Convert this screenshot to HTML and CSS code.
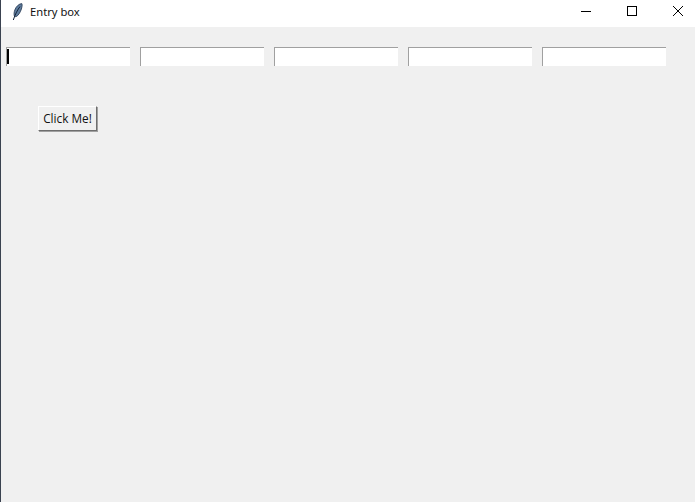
FILE: index.html
```html
<!DOCTYPE html>
<html lang="en">
<head>
    <meta charset="UTF-8">
    <meta name="viewport" content="width=device-width, initial-scale=1.0">
    <title>Entry box</title>
    <link rel="stylesheet" href="styles.css">
</head>
<body>
    <div class="window">
        <header class="titlebar">
            <svg class="app-icon" width="12" height="18" viewBox="0 0 12 18">
                <path d="M9.8 0.6C7 0.8 4 3.5 2.8 7C2 9.3 1.8 11.5 2.4 13.2C3.2 14 4.6 13.6 5.8 12.4C7.8 10.4 9.5 6.8 10 3.5C10.2 2.2 10.2 1.2 9.8 0.6Z" fill="#5f7d9e" stroke="#22344c" stroke-width="0.8"/>
                <path d="M8 3.5C5.8 6.5 3.2 11 1.3 17" fill="none" stroke="#14233a" stroke-width="1"/>
            </svg>
            <span class="title">Entry box</span>
            <div class="controls">
                <svg class="control" width="46" height="27" viewBox="0 0 46 27">
                    <path d="M24 11.5H34" stroke="#000" stroke-width="1"/>
                </svg>
                <svg class="control" width="46" height="27" viewBox="0 0 46 27">
                    <rect x="24.5" y="6.5" width="9" height="9" fill="none" stroke="#000" stroke-width="1"/>
                </svg>
                <svg class="control" width="46" height="27" viewBox="0 0 46 27">
                    <path d="M24 6L34 16M34 6L24 16" stroke="#000" stroke-width="1"/>
                </svg>
            </div>
        </header>
        <main class="content">
            <div class="entries">
                <div class="entry"><span class="caret"></span></div>
                <div class="entry"></div>
                <div class="entry"></div>
                <div class="entry"></div>
                <div class="entry"></div>
            </div>
            <button class="click-btn">Click Me!</button>
        </main>
    </div>
</body>
</html>
```

FILE: styles.css
```css
html, body {
    margin: 0;
    padding: 0;
    height: 100%;
    overflow: hidden;
}

body {
    font-family: "Open Sans", "Liberation Sans", sans-serif;
    background-color: #f0f0f0;
}

.window {
    height: 100%;
    display: flex;
    flex-direction: column;
    border-left: 1px solid #3a4250;
    box-sizing: border-box;
}

.titlebar {
    height: 27px;
    flex-shrink: 0;
    display: flex;
    align-items: center;
    background-color: white;
}

.app-icon {
    margin-left: 11px;
    margin-bottom: 3px;
}

.title {
    margin-left: 6px;
    margin-bottom: 4px;
    font-family: "Noto Sans", sans-serif;
    font-size: 11.2px;
    color: #111;
}

.controls {
    display: flex;
    margin-left: auto;
}

.control {
    display: block;
}

.content {
    flex: 1;
    padding: 20px 0 0 5px;
}

.entries {
    display: flex;
    gap: 10px;
}

.entry {
    width: 124px;
    height: 19px;
    box-sizing: border-box;
    background-color: white;
    border-top: 1px solid #a0a0a0;
    border-left: 1px solid #a0a0a0;
    padding: 1px 0 0 0;
}

.caret {
    display: block;
    width: 2px;
    height: 15px;
    background-color: black;
}

.click-btn {
    display: block;
    margin: 40px 0 0 32px;
    width: 59px;
    height: 25px;
    box-sizing: border-box;
    padding: 0 0 1px;
    font-family: "Open Sans", "Liberation Sans", sans-serif;
    font-size: 11.8px;
    color: #111;
    background-color: #f0f0f0;
    border: 1px solid;
    border-color: #fff #6e6e6e #6e6e6e #fff;
    box-shadow: 1px 1px 0 #a0a0a0;
}
```
